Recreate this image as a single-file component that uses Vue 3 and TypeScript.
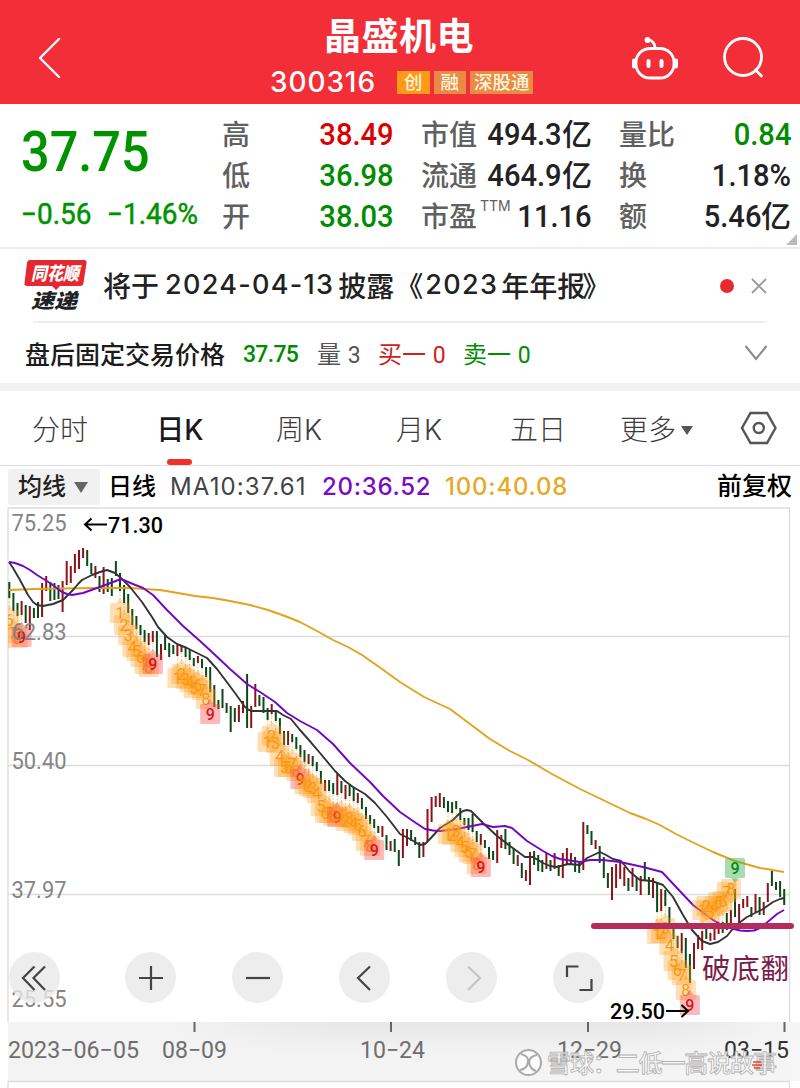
<template>
  <div class="page">
    <header class="header">
      <svg class="back" width="24" height="42" viewBox="0 0 24 42"><path d="M22 2 L3 21 L22 40" /></svg>
      <div class="title">
        <h1>晶盛机电</h1>
        <div class="sub">
          <span class="code">300316</span>
          <span v-for="t in tags" :key="t.text" class="tag" :class="t.kind">{{ t.text }}</span>
        </div>
      </div>
      <div class="actions">
        <svg width="48" height="46" viewBox="0 0 48 46">
          <rect x="5" y="12.500" width="38" height="29.500" rx="14" />
          <path d="M3 24.500 v6 M45 24.500 v6" class="ear" />
          <path d="M24 12.500 C24 7 21.500 4.500 17 3.500" />
          <circle cx="16.500" cy="4" r="1.500" class="solid" />
          <path d="M17.500 25 v5 M30.500 25 v5" class="ear" />
        </svg>
        <svg width="44" height="44" viewBox="0 0 44 44">
          <circle cx="21" cy="21" r="18.500" />
          <path d="M33.500 34 L39.500 40" />
        </svg>
      </div>
    </header>

    <section class="quote">
      <div class="price">
        <div class="last"><span class="din">37.75</span></div>
        <div class="change"><span class="din">−0.56</span><span class="din">−1.46%</span></div>
      </div>
      <div class="stats">
        <div v-for="s in stats" :key="s.label" class="stat">
          <span class="label">{{ s.label }}<sup v-if="s.sup">{{ s.sup }}</sup></span>
          <span class="value" :class="s.color"><span class="din">{{ s.value }}</span><span v-if="s.unit" class="unit">{{ s.unit }}</span></span>
        </div>
      </div>
      <i class="corner"></i>
    </section>

    <section class="news">
      <svg class="logo" width="64" height="54" viewBox="0 0 64 54">
        <path d="M6 1 H60 Q63 1 62.500 4 L59.500 24 Q59 27 56 27 H36 L32 31 L28 27 H3 Q0 27 .5 24 L3 4 Q3.500 1 6 1Z" />
        <text x="7" y="20.500" textLength="48" lengthAdjust="spacingAndGlyphs" class="brand">同花顺</text>
        <text x="7" y="49" textLength="46" lengthAdjust="spacingAndGlyphs" class="brand dark">速递</text>
      </svg>
      <p class="headline">将于<b class="d1">2024-04-13</b>披露<span class="lq">《</span><b class="d2">2023</b>年年报<span class="rq">》</span></p>
      <i class="dot"></i>
      <svg class="close" width="18" height="18" viewBox="0 0 18 18"><path d="M2 2 L16 16 M16 2 L2 16" /></svg>
    </section>

    <section class="after">
      <span class="name">盘后固定交易价格</span>
      <span class="num green">37.75</span>
      <span class="grey">量 <em>3</em></span>
      <span class="red">买一 <em>0</em></span>
      <span class="green">卖一 <em>0</em></span>
      <svg width="24" height="18" viewBox="0 0 24 18"><path d="M1.500 2 L12 15 L22.500 2" /></svg>
    </section>

    <nav class="tabs">
      <span v-for="t in tabs" :key="t" :class="{ active: t === '日K' }">{{ t }}<i v-if="t === '更多'" class="caret"></i></span>
      <svg width="38" height="34" viewBox="0 0 38 34">
        <path d="M10.500 2 H27 L35.500 17 L27 32 H10.500 L2 17Z" />
        <circle cx="18.800" cy="17" r="5" />
      </svg>
    </nav>

    <div class="ma">
      <span class="picker">均线<i class="caret big"></i></span>
      <span class="day">日线</span>
      <span class="m10">MA10:37.61</span>
      <span class="m20">20:36.52</span>
      <span class="m100">100:40.08</span>
      <span class="fq">前复权</span>
    </div>

    <div class="chart">
      <svg width="800" height="581" viewBox="0 507 800 581">
        <defs>
          <linearGradient id="band" x1="0" y1="0" x2="0" y2="1">
            <stop offset="0" stop-color="#e6e6e6" />
            <stop offset=".5" stop-color="#f3f3f3" />
            <stop offset="1" stop-color="#f4f4f4" />
          </linearGradient>
          <linearGradient id="fade" x1="0" y1="0" x2="1" y2="0">
            <stop offset="0" stop-color="#f3f3f3" />
            <stop offset=".2" stop-color="#f3f3f3" />
            <stop offset=".42" stop-color="#f3f3f3" stop-opacity="0" />
            <stop offset=".8" stop-color="#f3f3f3" stop-opacity="0" />
            <stop offset="1" stop-color="#f6f6f6" />
          </linearGradient>
          <clipPath id="plot"><rect x="8" y="508" width="782" height="514" /></clipPath>
        </defs>
        <rect x="8" y="1022" width="792" height="59" fill="url(#band)" />
        <rect x="8" y="1022" width="792" height="59" fill="url(#fade)" />
        <path class="grid" d="M8 508 H790 M8 636.500 H790 M8 765.500 H790 M8 894.500 H790 M8 508 V1022 M789.500 508 V1022 M8 1081.500 H790 M8 1081.500 V1088 M789.500 1081.500 V1088" />

        <g clip-path="url(#plot)">
          <path class="up" :d="barPath('r')" />
          <path class="down" :d="barPath('g')" />
          <path class="lead" :d="leads" />
          <polyline v-for="l in lines" :key="l.color" :points="l.points" :stroke="l.color" class="line" />

          <g v-for="m in marks" :key="m.bar" class="mark" :class="m.kind">
            <rect :x="m.x - 10" :y="m.y - 10" width="20" height="20" rx="1.500" />
            <path :d="m.tip" />
            <text :x="m.x" :y="m.y + 6">{{ m.n }}</text>
          </g>
        </g>

        <text v-for="a in axis" :key="a.text" x="11.500" :y="a.y" textLength="55" lengthAdjust="spacingAndGlyphs" class="axis">{{ a.text }}</text>

        <path class="arrow" d="M107 524.500 H85 M91.500 518.500 L85 524.500 L91.500 530.500 M666 1011 H688 M681.500 1005 L688 1011 L681.500 1017" />
        <text x="108" y="533" textLength="55" lengthAdjust="spacingAndGlyphs" class="peak">71.30</text>
        <text x="610" y="1019" textLength="55" lengthAdjust="spacingAndGlyphs" class="peak">29.50</text>

        <path d="M594 926 H791" class="support" />
        <text x="702" y="979" textLength="87" class="note">破底翻</text>

        <path class="tick" d="M194.500 1022 V1032 M391 1022 V1032 M588 1022 V1032 M784.500 1022 V1032" />
        <text v-for="d in dates" :key="d.text" :x="d.x" y="1058" :textLength="d.w" lengthAdjust="spacingAndGlyphs" class="date" :class="{ last: d.last }">{{ d.text }}</text>

        <g class="mark-logo">
          <circle cx="528.500" cy="1062.500" r="12.500" />
          <path d="M521 1054 Q529 1056 528 1062 Q527 1069 520 1070 M537 1055 Q530 1056 529 1062 Q530 1069 536 1071" />
        </g>
        <text x="547" y="1072" textLength="230" class="watermark">雪球：二低一高说故事</text>
        <path class="flag" d="M753 1062 H761 M752 1065 H762 M754 1068 H760" />
      </svg>
      <div class="tools">
        <button v-for="t in tools" :key="t.name" :class="t.name">
          <svg width="30" height="30" viewBox="0 0 30 30"><path :d="t.d" /></svg>
        </button>
      </div>
    </div>
  </div>
</template>

<script setup lang="ts">
interface Stat { label: string; value: string; unit?: string; sup?: string; color?: string }
interface Mark { bar: number; n: number; x: number; y: number; kind: string; tip: string }

const tags = [
  { text: '创', kind: 'hot' },
  { text: '融', kind: 'warm' },
  { text: '深股通', kind: 'warm' },
]

const stats: Stat[] = [
  { label: '高', value: '38.49', color: 'red' },
  { label: '市值', value: '494.3', unit: '亿' },
  { label: '量比', value: '0.84', color: 'green' },
  { label: '低', value: '36.98', color: 'green' },
  { label: '流通', value: '464.9', unit: '亿' },
  { label: '换', value: '1.18%' },
  { label: '开', value: '38.03', color: 'green' },
  { label: '市盈', sup: 'TTM', value: '11.16' },
  { label: '额', value: '5.46', unit: '亿' },
]

const tabs = ['分时', '日K', '周K', '月K', '五日', '更多']

// high-low of each day: top-bottom + colour
const raw = `582-598g 593-611g 603-616g 601-615r 605-623g 606-630r 608-618g 602-618g 583-617r 576-591r
582-601g 583-600g 585-599g 581-612r 561-585r 566-583r 554-573r 550-569r 548-558r 550-566g
563-574g 566-578r 576-592g 567-594r 579-592g 578-596g 561-576g 573-591g 585-603g 594-613g
609-625g 616-629g 625-635g 630-642g 633-645r 631-642r 631-657g 644-660r 635-650g 643-657g
645-654g 645-656r 646-652r 648-657g 650-660g 658-666g 656-663r 659-668g 667-677g 667-692g
685-707g 700-709g 689-708g 703-713g 706-732g 708-722g 705-722r 701-713r 674-728g 706-728r
684-707r 695-706g 697-713g 708-720g 704-714r 712-721g 718-734g 731-745g 731-745r 734-742g
737-749g 745-757g 750-762g 754-764r 756-766g 762-771g 771-784g 780-791r 780-791g 783-794g
774-795r 781-793g 785-799r 784-796g 787-801g 793-803r 798-809g 807-819g 815-824g 819-828g
826-833g 826-837r 835-850g 841-851r 839-852g 850-866g 829-858r 829-846r 830-841g 837-845g
842-858g 842-857r 809-841r 797-822r 796-807r 793-807r 797-808g 801-812g 802-813g 801-809g
808-820g 818-825g 818-830g 814-832g 831-842g 834-845r 840-848g 847-859g 851-860g 830-863r
835-848r 829-849g 842-855g 848-864g 855-866r 863-878g 870-881r 852-885r 851-865g 855-871g
860-872g 853-869r 860-871g 853-869r 865-876g 853-878r 848-865r 853-864r 857-872g 861-873g
822-870r 825-834g 831-845g 840-849r 846-863g 857-878g 873-888g 867-900r 864-888r 861-879r
867-886r 878-891g 868-887r 877-891g 876-895r 862-880g 877-895g 878-898r 883-912g 889-911r
890-906g 907-923g 923-939g 936-948g 933-953r 938-968g 954-983g 943-969r 935-949r 931-950r
927-939g 933-941r 927-940r 923-934r 922-933g 913-930g 910-929r 889-917g 904-923r 899-908r
896-907r 907-917g 894-912r 897-915g 902-915r 883-902r 871-886g 882-890g 881-897g 889-905g`

const bars = raw.split(/\s+/).map((s, i) => {
  const [top, rest] = s.split('-')
  return { x: +(9.3 + i * 4.1).toFixed(1), top: +top, bottom: parseInt(rest), color: rest.slice(-1) }
})

const barPath = (color: string) =>
  bars.filter(b => b.color === color).map(b => `M${b.x} ${b.top}V${b.bottom}`).join('')

// nine-count runs, each ending on the bar with the 9
const runs = [
  { end: 3, from: 6, above: false },
  { end: 35, from: 1, above: false },
  { end: 49, from: 1, above: false },
  { end: 71, from: 1, above: false },
  { end: 80, from: 1, above: false },
  { end: 89, from: 1, above: false },
  { end: 115, from: 1, above: false },
  { end: 166, from: 1, above: false },
  { end: 177, from: 1, above: true },
]

const marks: Mark[] = runs.flatMap(r => {
  const out: Mark[] = []
  for (let n = r.from; n <= 9; n++) {
    const b = bars[r.end - 9 + n]
    const y = r.above ? b.top - 21 : b.bottom + 22
    const kind = n < 9 ? 'count' : r.above ? 'buy' : 'sell'
    const tip = r.above
      ? `M${b.x - 4} ${y + 10}h8l-4 5z`
      : `M${b.x - 4} ${y - 10}h8l-4 -5z`
    out.push({ bar: r.end - 9 + n, n, x: b.x, y, kind, tip })
  }
  return out
})

const leads = marks.map(m => {
  const b = bars[m.bar]
  return m.y > b.bottom ? `M${b.x} ${b.bottom}V${m.y - 10}` : `M${b.x} ${b.top}V${m.y + 10}`
}).join('')

const lines = [
  {
    color: '#e3a21a',
    points: '9,590 35,589 60,588.500 95,588 130,588 160,590 178,593 195,596 213,598 230,601 250,605 268,610 285,616 300,622 317,631 333,640 348,647 362,655 382,669 400,682 424,697 450,709 470,724 490,739 510,751 528,760 552,774 580,789 603,800 630,813 645,818.500 660,825 675,833.500 690,841 713,852 735,861 760,868 784,872',
  },
  {
    color: '#333',
    points: '9,562 13,568 20,580 28,595 33,602 37,605 43,606 53,604 63,600 73,590 78,584 82,580 92,575 100,572 107,570 115,573 122,579 130,587 142,602 152,617 158,627 167,637 177,644 187,648 197,653 207,658 217,669 235,693 245,707 249,710 252,711 277,711 283,715 291,719 300,730 308,739 320,753 335,771 345,781 353,787 365,794 375,803 387,817 400,834 410,839 420,845 425,844 430,839 440,828 453,820 459,814 463,811 467,810 471,811 483,823 497,836 510,846 525,857 533,857 543,863 550,866 557,867 568,864 580,865 587,858 600,852 606,855 613,859 621,861 630,872 640,880 652,881 663,885 673,897 683,915 692,930 702,941 710,944 718,942 727,936 735,926 747,917 763,909 773,902 780,899 784,898',
  },
  {
    color: '#7306c4',
    points: '9,562 15,563 23,566 30,570 37,575 50,583 62,592 67,594 72,595 83,593 97,588 108,584 121,579 133,584 143,588 153,595 167,610 183,626 200,641 213,653 230,669 247,684 260,692 275,702 287,713 300,721 317,730 333,744 350,763 370,782 383,796 400,812 413,821 425,829 433,830.500 440,831 457,829 482,824 493,827 505,826 512,828 527,841 543,851 552,856 560,859 580,862 590,860 603,860 620,862 643,867 662,872 677,888 693,905 713,920 722,925 730,928 740,930.500 747,931 754,930.500 760,928 770,920 777,914 784,910',
  },
]

const axis = [
  { text: '75.25', y: 531 },
  { text: '62.83', y: 639.5 },
  { text: '50.40', y: 768.5 },
  { text: '37.97', y: 897.5 },
  { text: '25.55', y: 1006.5 },
]

const dates = [
  { text: '2023−06−05', x: 8, w: 131, last: false },
  { text: '08−09', x: 162, w: 65, last: false },
  { text: '10−24', x: 360, w: 65, last: false },
  { text: '12−29', x: 557, w: 65, last: false },
  { text: '03−15', x: 724, w: 65, last: true },
]

const tools = [
  { name: 'first', d: 'M14.500 3.500 L3 15 L14.500 27 M25 3.500 L13.500 15 L25 27' },
  { name: 'plus', d: 'M15 3 V27 M3 15 H27' },
  { name: 'minus', d: 'M3 15 H27' },
  { name: 'prev', d: 'M20 3.500 L8 15 L20 27' },
  { name: 'next', d: 'M11 3.500 L23 15 L11 27' },
  { name: 'full', d: 'M14.500 3.500 H3 V14 M15.500 27 H27.500 V16' },
]
</script>

<style>
body { background:#fff; }
</style>

<style scoped>
.page { width:800px; height:1088px; overflow:hidden; background:#fff; font-family:Inter, "Noto Sans CJK SC", sans-serif; color:#222; }
svg { display:block; fill:none; flex:none; }
.din { display:inline-block; font-family:Roboto, sans-serif; font-weight:500; }
.red { color:#d90000; }
.green { color:#008c00; }

.header { height:104px; box-sizing:border-box; background:#f22f38; display:grid; grid-template-columns:260px 1fr 200px; padding-left:10px; color:#fff; }
.header svg { stroke:#fff; stroke-width:2.8; stroke-linecap:round; stroke-linejoin:round; }
.header .back { margin:37px 0 0 27px; stroke-width:2.4; }
.title h1 { margin:11px 0 0 54px; font-size:37px; line-height:52px; font-weight:700; letter-spacing:.5px; }
.sub { display:flex; align-items:center; height:38px; gap:4px; }
.code { font-size:28px; font-weight:500; width:123px; letter-spacing:.9px; }
.tag { height:23px; line-height:22px; font-size:18.5px; font-weight:500; padding:0 7px; color:#fff6dc; }
.tag:last-child { padding:0 3px 0 4px; }
.tag.hot { background:#ff9a16; }
.tag.warm { background:#e98a45; }
.actions { display:flex; gap:43px; padding:36px 0 0 31px; }
.actions .ear { stroke-width:4; }
.actions .solid { fill:#fff; }

.quote { position:relative; height:145px; box-sizing:border-box; border-bottom:2px solid #ececec; display:flex; }
.price { width:222px; box-sizing:border-box; padding:15px 0 0 21px; color:#009300; white-space:nowrap; }
.last { font-size:56px; line-height:64px; height:64px; }
.last .din { transform:scaleX(.9); transform-origin:left; }
.change { display:flex; margin-top:14px; height:34px; line-height:34px; font-size:29px; }
.change .din { transform:scaleX(.965); transform-origin:left; width:86px; font-weight:400; -webkit-text-stroke:.5px; }
.stats { display:grid; grid-template-columns:172px 171px 172px; grid-template-rows:41px 41px 41px; column-gap:27px; padding-top:10px; flex:1; }
.stat { display:flex; justify-content:space-between; align-items:center; position:relative; white-space:nowrap; }
.label { font-size:28px; line-height:41px; font-weight:500; color:#606060; padding-top:2px; }
.label sup { font-size:14px; line-height:14px; font-weight:400; position:absolute; left:59px; top:3px; }
.value { display:flex; justify-content:flex-end; align-items:center; font-size:32px; line-height:41px; }
.value .din { transform:scaleX(.91); transform-origin:right; margin-top:-1px; }
.unit { font-size:30px; font-weight:500; }
.corner { position:absolute; right:3px; bottom:2px; border-left:11px solid transparent; border-bottom:11px solid #bbb; }

.news { height:73px; display:flex; align-items:center; padding:0 32px 0 24px; position:relative; box-sizing:border-box; }
.news::after { content:''; position:absolute; left:33px; right:33px; bottom:-1px; height:2px; background:#ededed; }
.logo path { fill:#e5272f; }
.brand { font:italic 900 18px/1 "Noto Sans CJK SC", sans-serif; fill:#fff; }
.brand.dark { font-size:20px; fill:#222; }
.headline { margin:-2px 0 0 15px; width:617px; font-size:28px; font-weight:500; white-space:nowrap; display:flex; align-items:center; }
.headline b { font-size:27px; font-weight:500; letter-spacing:1.3px; }
.d1 { margin:0 4px 0 6px; }
.lq { margin-left:1px; }
.d2 { margin:0 3px 0 2px; }
.rq { margin-left:-3px; }
.dot { width:14px; height:14px; border-radius:50%; background:#e62b2e; }
.close { margin-left:16px; stroke:#999; stroke-width:1.8; }

.after { height:61px; display:flex; align-items:center; padding:0 32px 0 25px; box-sizing:border-box; font-size:24px; white-space:nowrap; }
.after .name { font-size:25px; font-weight:500; width:218px; color:#1c1c1c; }
.after .num, .after em { font-family:Roboto, sans-serif; font-style:normal; font-weight:500; font-size:23px; }
.after .num { width:74px; margin-top:4px; letter-spacing:-.7px; }
.after em { font-weight:400; }
.after .grey { width:61px; color:#555; }
.after span.red { width:85px; color:#cf2020; }
.after svg { margin-left:auto; stroke:#888; stroke-width:2; }

.tabs { height:83px; box-sizing:border-box; border-top:8px solid #f3f3f3; border-bottom:1px solid #ddd; display:grid; grid-template-columns:120px 120px 118px 122px 116px 121px 1fr; align-items:center; font-size:28px; font-weight:300; color:#3c3c3c; }
.tabs span { position:relative; text-align:center; line-height:70px; padding-top:4px; }
.tabs .active { color:#1a1a1a; font-weight:500; }
.tabs .active::after { content:''; position:absolute; left:47px; bottom:0; width:25px; height:6px; border-radius:3px; background:#f0302e; }
.tabs svg { margin-left:23px; stroke:#555; stroke-width:2.4; }
.caret { display:inline-block; margin-left:5px; vertical-align:5px; border:6px solid transparent; border-top:9px solid #555; border-bottom:0; }
.caret.big { margin-left:8px; vertical-align:2px; border-width:11px 7px 0; border-top-color:#666; }

.ma { height:41px; display:flex; align-items:center; padding:0 8px; font-size:24px; line-height:36px; font-weight:500; white-space:nowrap; }
.picker { width:92px; height:36px; box-sizing:border-box; padding-left:10px; background:#f1f1f1; border-radius:3px; }
.day { width:70px; padding-left:8px; box-sizing:border-box; color:#000; }
.m10 { width:152px; font-weight:400; color:#444; letter-spacing:1.1px; }
.m20 { width:123px; color:#7a0ac4; letter-spacing:.7px; }
.m100 { color:#e8a825; letter-spacing:.8px; }
.fq { margin:-2px 0 0 auto; color:#000; font-size:25px; }

.chart { position:relative; height:581px; }
.grid { stroke:#dcdcdc; stroke-width:1.3; }
.up { stroke:#8e1218; stroke-width:2; }
.down { stroke:#0b4a16; stroke-width:2; }
.lead { stroke:#f3c779; stroke-width:1; stroke-dasharray:2 1.5; }
.line { stroke-width:1.9; stroke-linejoin:round; }
.mark text { font:16px Roboto, sans-serif; text-anchor:middle; }
.mark.count { fill:rgba(255, 152, 20, .32); }
.mark.count text { fill:#f59a14; }
.mark.sell { fill:rgba(250, 60, 70, .36); }
.mark.sell text { fill:#d81420; font-weight:500; }
.mark.buy { fill:rgba(60, 180, 80, .45); }
.mark.buy text { fill:#008a10; font-weight:500; }
.axis { font:23px Roboto, sans-serif; fill:#858585; }
.arrow { stroke:#000; stroke-width:2; }
.peak { font:500 22.5px Roboto, sans-serif; fill:#000; }
.support { stroke:#b32c5b; stroke-width:6; stroke-linecap:round; }
.note { font:400 28.5px "Noto Sans CJK SC", sans-serif; fill:#7c1c4b; }
.tick { stroke:#666; stroke-width:2; }
.date { font:23px Roboto, sans-serif; fill:#6e6e6e; }
.date.last { fill:#333; }
.mark-logo { stroke:#aaa; stroke-width:2; fill:rgba(255, 255, 255, .6); }
.watermark { font:500 24px "Noto Sans CJK SC", sans-serif; fill:rgba(255, 255, 255, .75); stroke:#b0b0b0; stroke-width:.8; }
.flag { stroke:#e8473f; stroke-width:1.6; }

.tools { position:absolute; left:9px; top:445px; display:flex; gap:56px; }
.tools button { width:51px; height:51px; padding:0; border:0; border-radius:50%; background:rgba(232, 232, 232, .8); display:flex; align-items:center; justify-content:center; }
.tools .first { margin-right:9px; }
.tools svg { stroke:#444; stroke-width:2.2; }
.tools .next svg { stroke:#c4c4c4; }
</style>
